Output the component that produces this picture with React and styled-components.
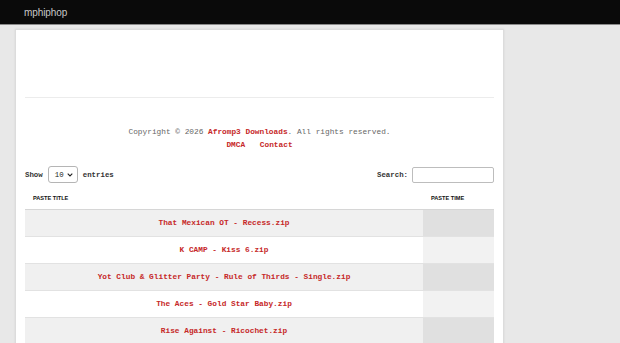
import styled, { createGlobalStyle } from "styled-components"

const GlobalStyle = createGlobalStyle`
    body {
        margin: 0;
        background-color: #e8e8e8;
        font-family: "Liberation Sans", Arial, sans-serif;
    }
`

const NavBar = styled.div`
    height: 24px;
    background-color: #0a0a0a;
    border-bottom: 1px solid #8a8a8a;
    display: flex;
    align-items: center;
    padding-left: 24px;
`

const Brand = styled.div`
    color: #c8c8c8;
    font-size: 10px;
    letter-spacing: -0.1px;
`

const Card = styled.div`
    width: 469px;
    margin: 4px 0 0 15px;
    padding: 9px;
    background-color: white;
    border: 1px solid #dcdcdc;
    box-shadow: 0 0 2px rgba(0,0,0,0.08);
`

const AdSpace = styled.div`
    height: 58px;
`

const Rule = styled.div`
    height: 1px;
    background-color: #ececec;
`

const Footer = styled.div`
    margin-top: 28px;
    text-align: center;
    font-family: "Liberation Mono", "Courier New", monospace;
    font-size: 7.8px;
    line-height: 13px;
    color: #666;
`

const RedLink = styled.a`
    color: #c62828;
    font-weight: bold;
    text-decoration: none;
    margin: ${(props) => props.$gap ? "0 5px" : "0"};
`

const Controls = styled.div`
    margin-top: 14px;
    display: flex;
    justify-content: space-between;
    align-items: center;
    font-family: "Liberation Mono", "Courier New", monospace;
    font-weight: bold;
    font-size: 7.4px;
    color: #333;
`

const Group = styled.div`
    display: flex;
    align-items: center;
    gap: ${(props) => props.$gap || "4px"};
`

const Select = styled.div`
    width: 30px;
    height: 17px;
    border: 1px solid #b5b5b5;
    border-radius: 3px;
    display: flex;
    align-items: center;
    justify-content: space-between;
    padding: 0 4px 0 6px;
    box-sizing: border-box;
    font-weight: normal;
    color: #222;
`

const Chevron = styled.svg`
    width: 6px;
    height: 4px;
`

const SearchBox = styled.div`
    width: 82px;
    height: 16px;
    box-sizing: border-box;
    border: 1px solid #bdbdbd;
    border-radius: 2px;
`

const Table = styled.table`
    width: 100%;
    margin-top: 4px;
    border-collapse: collapse;
`

const Th = styled.th`
    text-align: left;
    padding: 0 8px;
    height: 22px;
    font-family: "Liberation Sans", Arial, sans-serif;
    font-weight: 900;
    font-size: 5.6px;
    color: #111;
    border-bottom: 1px solid #d6d6d6;
    width: ${(props) => props.$w || "auto"};
`

const Td = styled.td`
    height: 26px;
    padding: 0;
    border-top: 1px solid #e2e2e2;
    text-align: center;
    font-family: "Liberation Mono", "Courier New", monospace;
    font-size: 7.8px;
    background-color: ${(props) => props.$odd ? (props.$time ? "#e0e0e0" : "#f0f0f0") : (props.$time ? "#f2f2f2" : "#ffffff")};
`

const rows = [
    "That Mexican OT - Recess.zip",
    "K CAMP - Kiss 6.zip",
    "Yot Club & Glitter Party - Rule of Thirds - Single.zip",
    "The Aces - Gold Star Baby.zip",
    "Rise Against - Ricochet.zip",
]

export default function App() {
    return <>
        <GlobalStyle />
        <NavBar>
            <Brand>mphiphop</Brand>
        </NavBar>
        <Card>
            <AdSpace />
            <Rule />
            <Footer>
                <div>Copyright © 2026 <RedLink>Afromp3 Downloads</RedLink>. All rights reserved.</div>
                <div><RedLink $gap>DMCA</RedLink> <RedLink $gap>Contact</RedLink></div>
            </Footer>
            <Controls>
                <Group $gap="5px">
                    <span>Show</span>
                    <Select>
                        <span>10</span>
                        <Chevron viewBox="0 0 6 4"><path d="M0.7 0.7 L3 3 L5.3 0.7" fill="none" stroke="#222" strokeWidth="1.1" /></Chevron>
                    </Select>
                    <span>entries</span>
                </Group>
                <Group>
                    <span>Search:</span>
                    <SearchBox />
                </Group>
            </Controls>
            <Table>
                <thead>
                    <tr>
                        <Th>PASTE TITLE</Th>
                        <Th $w="55px">PASTE TIME</Th>
                    </tr>
                </thead>
                <tbody>
                    {rows.map((r, i) => (
                        <tr key={i}>
                            <Td $odd={i % 2 == 0}><RedLink>{r}</RedLink></Td>
                            <Td $odd={i % 2 == 0} $time></Td>
                        </tr>
                    ))}
                </tbody>
            </Table>
        </Card>
    </>
}
